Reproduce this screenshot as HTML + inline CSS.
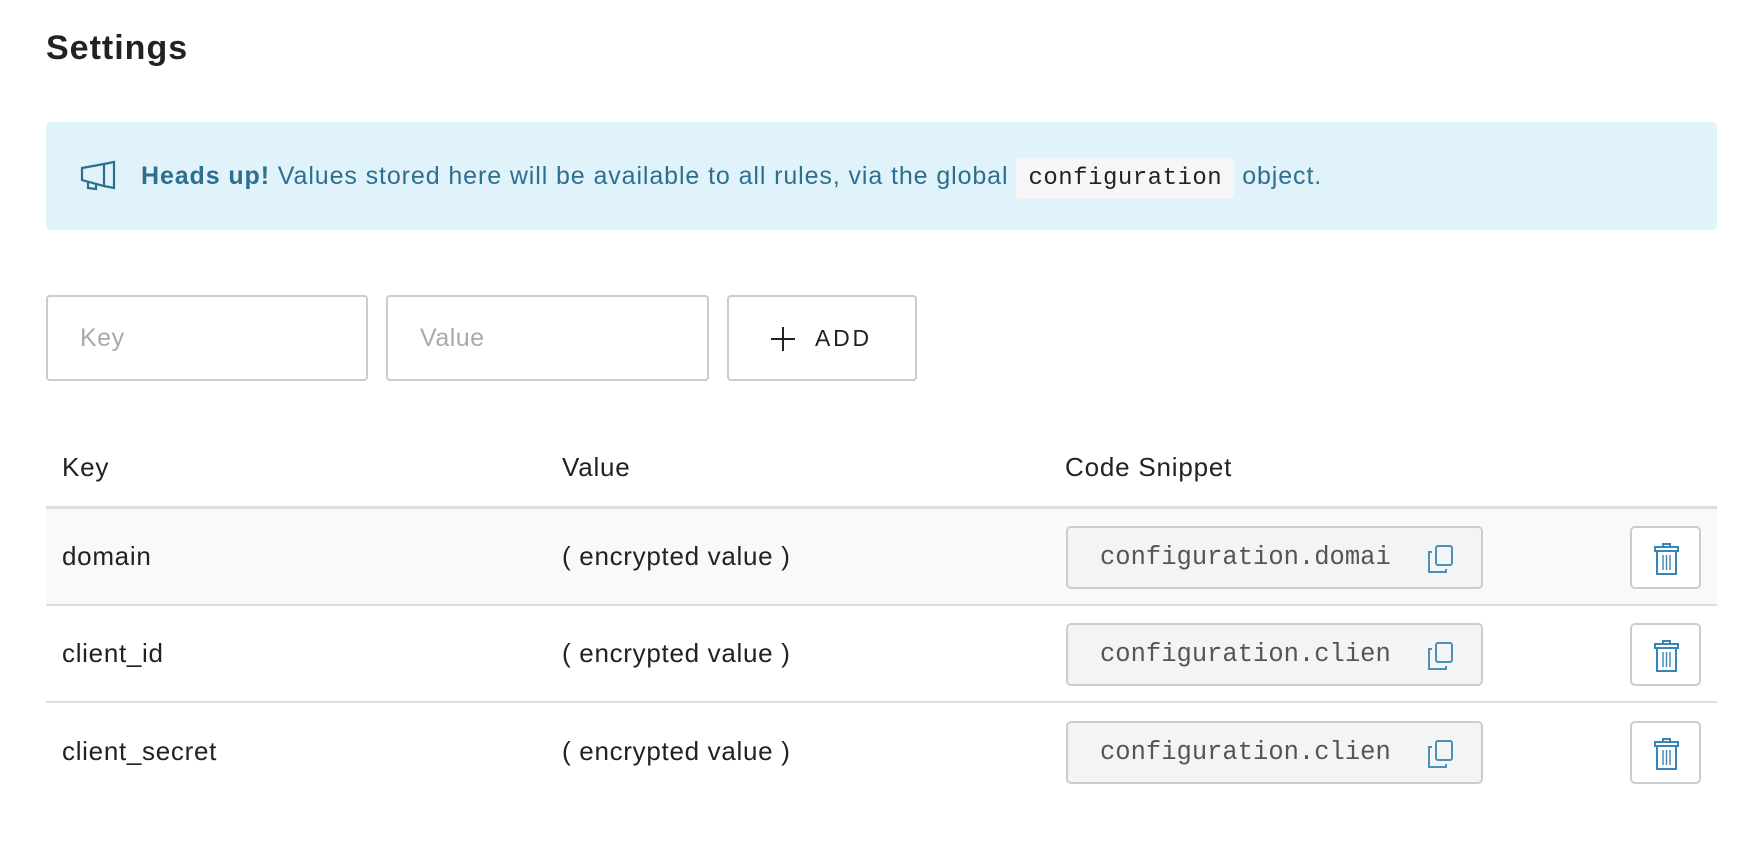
<!DOCTYPE html>
<html><head><meta charset="utf-8"><style>
*{box-sizing:border-box;margin:0;padding:0}
body{width:1756px;height:864px;background:#fff;font-family:"Liberation Sans",sans-serif;color:#222;position:relative;overflow:hidden}
.abs{position:absolute}
h1{position:absolute;left:46px;top:29px;font-size:34px;font-weight:bold;color:#222;letter-spacing:1px}
.alert{left:46px;top:122px;width:1671px;height:108px;background:#e0f3fa;border-radius:5px}
.alert .t{position:absolute;left:95px;top:0;line-height:108px;font-size:25px;letter-spacing:0.9px;color:#2e6e8e;white-space:nowrap}
.alert code{font-family:"Liberation Mono",monospace;font-size:24px;letter-spacing:0.5px;color:#222;background:#f4f6f7;border-radius:4px;padding:7px 12px;margin:0 8px}
.inp{top:295px;height:86px;border:2px solid #ccc;border-radius:4px;font-size:25px;letter-spacing:0.5px;color:#aaa;padding-left:32px;line-height:82px}
.btn{left:727px;top:295px;width:190px;height:86px;border:2px solid #ccc;border-radius:4px;font-size:23px;letter-spacing:2.8px;color:#222;line-height:82px;padding-left:86px}
.th{top:452px;font-size:26px;letter-spacing:0.8px;color:#222}
.hb{left:46px;top:506px;width:1671px;height:3px;background:#ddd}
.row{left:46px;width:1671px;height:97px;border-bottom:2px solid #ddd}
.cell{position:absolute;top:0;line-height:95px;font-size:26px;letter-spacing:0.7px;color:#222}
.snip{position:absolute;left:1020px;top:17px;width:417px;height:63px;background:#f3f4f4;border:2px solid #ccc;border-radius:5px}
.snip span{position:absolute;left:32px;top:0;line-height:59px;font-family:"Liberation Mono",monospace;font-size:25.5px;color:#555}
.snip svg{position:absolute;left:359px;top:16px}
.del{position:absolute;left:1584px;top:17px;width:71px;height:63px;border:2px solid #ccc;border-radius:5px;background:#fff}
.del svg{position:absolute;left:22px;top:15px}
</style></head><body>
<h1>Settings</h1>
<div class="abs alert">
<svg class="abs" style="left:34px;top:38px" width="36" height="32" viewBox="0 0 36 32" fill="none" stroke="#2e6e8e" stroke-width="2.2"><path d="M2 8 L24 4 L24 26 L2 20 Z"/><path d="M24 4 L34 2 L34 28 L24 26"/><path d="M8 21 L8 28 L16 29 L16 23"/></svg>
<div class="t"><b>Heads up!</b> Values stored here will be available to all rules, via the global<code>configuration</code>object.</div>
</div>
<div class="abs inp" style="left:46px;width:322px">Key</div>
<div class="abs inp" style="left:386px;width:323px">Value</div>
<div class="abs btn"><svg class="abs" style="left:42px;top:30px" width="24" height="24" viewBox="0 0 24 24" stroke="#222" stroke-width="2"><path d="M12 0V24M0 12H24"/></svg>ADD</div>
<div class="abs th" style="left:62px">Key</div>
<div class="abs th" style="left:562px">Value</div>
<div class="abs th" style="left:1065px">Code Snippet</div>
<div class="abs hb"></div>

<div class="abs row" style="top:509px;background:#f9f9f9">
<div class="cell" style="left:16px">domain</div><div class="cell" style="left:516px">( encrypted value )</div>
<div class="snip"><span>configuration.domai</span><svg width="28" height="30" viewBox="0 0 28 30" fill="none" stroke="#4a90b8" stroke-width="2"><rect x="9" y="2" width="16" height="19" rx="2"/><path d="M5 8 L2 8 L2 28 L19 28 L19 25"/></svg></div>
<div class="del"><svg width="25" height="32" viewBox="0 0 25 32" fill="none" stroke="#3a85b5" stroke-width="2"><path d="M9 4V1h7v3"/><rect x="1" y="4" width="23" height="4"/><path d="M3 8 L3 31 L22 31 L22 8"/><path d="M9 12V27M12.5 12V27M16 12V27" stroke-width="1.4"/></svg></div>
</div>
<div class="abs row" style="top:606px">
<div class="cell" style="left:16px">client_id</div><div class="cell" style="left:516px">( encrypted value )</div>
<div class="snip"><span>configuration.clien</span><svg width="28" height="30" viewBox="0 0 28 30" fill="none" stroke="#4a90b8" stroke-width="2"><rect x="9" y="2" width="16" height="19" rx="2"/><path d="M5 8 L2 8 L2 28 L19 28 L19 25"/></svg></div>
<div class="del"><svg width="25" height="32" viewBox="0 0 25 32" fill="none" stroke="#3a85b5" stroke-width="2"><path d="M9 4V1h7v3"/><rect x="1" y="4" width="23" height="4"/><path d="M3 8 L3 31 L22 31 L22 8"/><path d="M9 12V27M12.5 12V27M16 12V27" stroke-width="1.4"/></svg></div>
</div>
<div class="abs row" style="top:704px;border-bottom:none">
<div class="cell" style="left:16px">client_secret</div><div class="cell" style="left:516px">( encrypted value )</div>
<div class="snip"><span>configuration.clien</span><svg width="28" height="30" viewBox="0 0 28 30" fill="none" stroke="#4a90b8" stroke-width="2"><rect x="9" y="2" width="16" height="19" rx="2"/><path d="M5 8 L2 8 L2 28 L19 28 L19 25"/></svg></div>
<div class="del"><svg width="25" height="32" viewBox="0 0 25 32" fill="none" stroke="#3a85b5" stroke-width="2"><path d="M9 4V1h7v3"/><rect x="1" y="4" width="23" height="4"/><path d="M3 8 L3 31 L22 31 L22 8"/><path d="M9 12V27M12.5 12V27M16 12V27" stroke-width="1.4"/></svg></div>
</div>
</body></html>
